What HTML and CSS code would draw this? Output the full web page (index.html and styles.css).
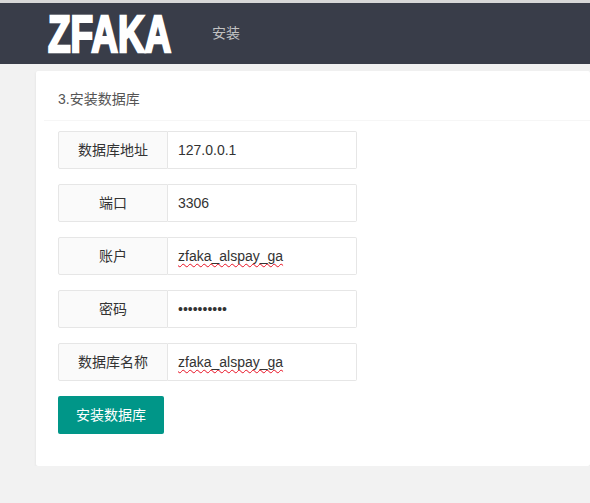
FILE: index.html
```html
<!DOCTYPE html>
<html lang="en">
<head>
    <meta charset="UTF-8">
    <title>ZFAKA 安装</title>
    <link rel="stylesheet" href="styles.css">
</head>
<body>
    <div class="header">
        <div class="logo"><span class="logo-text">ZFAKA</span></div>
        <a class="nav-item" href="#">安装</a>
    </div>

    <div class="card">
        <div class="card-title">3.安装数据库</div>
        <form class="card-body">
            <div class="form-row">
                <label class="form-label">数据库地址</label>
                <input class="form-input" type="text" value="127.0.0.1">
            </div>
            <div class="form-row">
                <label class="form-label">端口</label>
                <input class="form-input" type="text" value="3306">
            </div>
            <div class="form-row">
                <label class="form-label">账户</label>
                <input class="form-input misspelled" type="text" value="zfaka_alspay_ga">
            </div>
            <div class="form-row">
                <label class="form-label">密码</label>
                <input class="form-input" type="password" value="1234567890">
            </div>
            <div class="form-row">
                <label class="form-label">数据库名称</label>
                <input class="form-input misspelled" type="text" value="zfaka_alspay_ga">
            </div>
            <button class="install-btn" type="button">安装数据库</button>
        </form>
    </div>
</body>
</html>
```

FILE: styles.css
```css
* {
    box-sizing: border-box;
    margin: 0;
    padding: 0;
}

body {
    font-family: "Liberation Sans", "Noto Sans CJK SC", sans-serif;
    font-size: 14px;
    color: #333;
    background-color: #f2f2f2;
    border-top: 3px solid #d8d8d8;
    overflow: hidden;
}

.header {
    display: flex;
    align-items: center;
    height: 61px;
    padding-left: 48px;
    background: #393d49;
}

.logo {
    flex: none;
    width: 124px;
    height: 61px;
    padding-top: 9px;
    line-height: 47px;
}

.logo-text {
    display: inline-block;
    font-size: 50px;
    font-weight: 700;
    color: #fff;
    -webkit-text-stroke: 2.5px #fff;
    transform: scale(0.74, 1.02);
    transform-origin: left center;
}

.nav-item {
    margin-left: 40px;
    padding-bottom: 3px;
    color: #c2c2c2;
    text-decoration: none;
}

.card {
    width: 554px;
    height: 395px;
    margin: 7px 0 0 36px;
    background: #fff;
    border-radius: 2px;
    box-shadow: 0 1px 3px rgba(0,0,0,0.08);
}

.card-title {
    height: 50px;
    margin-left: 8px;
    padding-left: 14px;
    line-height: 57px;
    color: #555;
    border-bottom: 1px solid #f6f6f6;
}

.card-body {
    padding: 10px 22px;
}

.form-row {
    display: flex;
    width: 299px;
    height: 38px;
    margin-bottom: 15px;
}

.form-label {
    width: 110px;
    line-height: 36px;
    text-align: center;
    background: #fafafa;
    border: 1px solid #e6e6e6;
    border-radius: 2px 0 0 2px;
}

.form-input {
    flex: 1;
    min-width: 0;
    padding-left: 10px;
    font-family: inherit;
    font-size: 14px;
    line-height: 30px;
    color: #333;
    background: #fff;
    border: 1px solid #e6e6e6;
    border-left: 0;
    border-radius: 0 2px 2px 0;
    outline: none;
}

.misspelled {
    text-decoration: underline wavy #e81123 1px;
    text-decoration-skip-ink: none;
    text-underline-offset: 2px;
}

.install-btn {
    display: block;
    width: 106px;
    height: 38px;
    padding-bottom: 2px;
    font-family: inherit;
    font-size: 14px;
    color: #fff;
    background: #009688;
    border: none;
    border-radius: 2px;
}
```
